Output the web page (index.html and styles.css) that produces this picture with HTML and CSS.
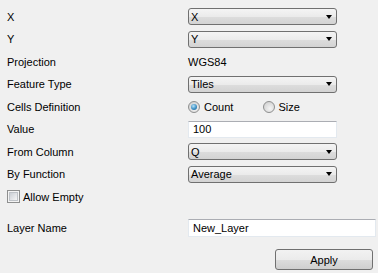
FILE: index.html
```html
<html>

<head>
    <title>Create Grid</title>
    <link rel="stylesheet" href="styles.css">
</head>

<body>
    <div class="form">

        <label>X</label>
        <div class="combo"><span>X</span><i class="arrow"></i></div>

        <label>Y</label>
        <div class="combo"><span>Y</span><i class="arrow"></i></div>

        <label>Projection</label>
        <div class="value-text">WGS84</div>

        <label>Feature Type</label>
        <div class="combo"><span>Tiles</span><i class="arrow"></i></div>

        <label>Cells Definition</label>
        <div class="radios">
            <div class="radio-item"><i class="radio checked"></i><span>Count</span></div>
            <div class="radio-item"><i class="radio"></i><span>Size</span></div>
        </div>

        <label>Value</label>
        <div class="textbox short">100</div>

        <label>From Column</label>
        <div class="combo"><span>Q</span><i class="arrow"></i></div>

        <label>By Function</label>
        <div class="combo"><span>Average</span><i class="arrow"></i></div>

        <div class="check-row"><i class="checkbox"></i><span>Allow Empty</span></div>
    </div>

    <div class="layer-row">
        <label>Layer Name</label>
        <div class="textbox wide">New_Layer</div>
    </div>

    <div class="actions">
        <button>Apply</button>
    </div>
</body>

</html>
```

FILE: styles.css
```css
body {
    margin: 0;
    background-color: #f0f0f0;
    font-family: "Liberation Sans", Arial, sans-serif;
    font-size: 11px;
    color: #000;
    width: 378px;
    height: 273px;
    overflow: hidden;
}

.form {
    display: grid;
    grid-template-columns: 181px 149px;
    grid-auto-rows: 17px;
    row-gap: 5.5px;
    padding: 8px 0 0 7px;
}

label {
    display: flex;
    align-items: center;
}

.combo {
    display: flex;
    align-items: center;
    justify-content: space-between;
    box-sizing: border-box;
    height: 17px;
    border: 1px solid #707070;
    border-radius: 3px;
    background: linear-gradient(#f4f4f4, #ebebeb 50%, #dddddd 51%, #d3d3d3);
    padding: 0 4px 0 2px;
}

.arrow {
    width: 0;
    height: 0;
    border-left: 3.5px solid transparent;
    border-right: 3.5px solid transparent;
    border-top: 4px solid #000;
}

.value-text {
    display: flex;
    align-items: center;
    color: #000;
}

.radios {
    display: flex;
    align-items: center;
    gap: 0;
}

.radio-item {
    display: flex;
    align-items: center;
    gap: 4px;
    width: 75px;
}

.radio {
    box-sizing: border-box;
    width: 12px;
    height: 12px;
    border: 1px solid #8e8f8f;
    border-radius: 50%;
    background: radial-gradient(circle at 60% 65%, #f4f4f4, #d6d6d6 70%, #c8c8c8);
    display: flex;
    align-items: center;
    justify-content: center;
}

.radio.checked::after {
    content: "";
    width: 6px;
    height: 6px;
    border-radius: 50%;
    background: radial-gradient(circle at 40% 35%, #b7e3f8, #3d8fc4 55%, #1b5b88);
}

.textbox {
    display: flex;
    align-items: center;
    box-sizing: border-box;
    background: #fff;
    border: 1px solid #e3e9ef;
    border-top-color: #abadb3;
    padding-left: 4px;
}

.textbox.short {
    height: 17px;
}

.check-row {
    grid-column: 1 / 3;
    display: flex;
    align-items: center;
    gap: 3px;
}

.checkbox {
    box-sizing: border-box;
    width: 13px;
    height: 13px;
    border: 1px solid #8e8f8f;
    padding: 2px;
    background: #f4f4f4;
    display: flex;
}

.checkbox::after {
    content: "";
    flex: 1;
    background: linear-gradient(135deg, #cbcfd5, #f6f6f6);
    border: 1px solid #bfc3c8;
    margin: -1px;
}

.layer-row {
    display: grid;
    grid-template-columns: 181px 188px;
    padding: 14px 0 0 7px;
}

.textbox.wide {
    height: 18px;
}

.actions {
    display: flex;
    justify-content: flex-end;
    padding: 12px 5px 0 0;
}

button {
    width: 98px;
    height: 21px;
    font-family: "Liberation Sans", Arial, sans-serif;
    font-size: 11px;
    color: #000;
    border: 1px solid #707070;
    border-radius: 3px;
    background: linear-gradient(#f2f2f2, #ebebeb 50%, #dddddd 51%, #cfcfcf);
    padding: 0;
}
```
